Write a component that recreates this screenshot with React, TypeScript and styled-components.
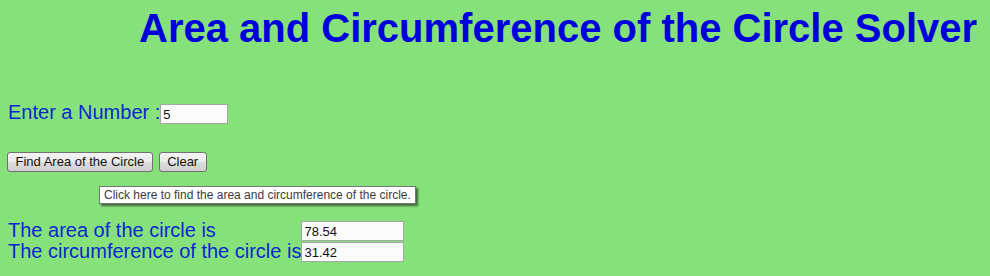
import React from "react";
import styled, { createGlobalStyle } from "styled-components";

const GlobalStyle = createGlobalStyle`
  html, body {
    margin: 0;
    padding: 0;
    background: #87e17b;
  }
  body {
    font-family: "Liberation Sans", Arial, sans-serif;
    min-height: 276px;
  }
`;

const Page = styled.main`
  display: flex;
  flex-direction: column;
  align-items: flex-start;
  padding: 5px 0 0 8px;
`;

const Title = styled.h1`
  margin: 0;
  padding-left: 131px;
  font-family: "Liberation Sans", Arial, sans-serif;
  font-size: 40px;
  font-weight: bold;
  line-height: 46px;
  color: #0000dc;
  white-space: nowrap;
`;

const NumberRow = styled.div`
  display: flex;
  align-items: flex-start;
  margin-top: 50px;
`;

const Label = styled.span`
  font-size: 20px;
  line-height: 23px;
  color: #0a28d0;
  white-space: pre;
`;

const TextBox = styled.input<{ $w: number; $top?: number }>`
  box-sizing: border-box;
  width: ${(p) => p.$w}px;
  height: 20px;
  margin: ${(p) => p.$top ?? 0}px 0 0 0;
  padding: 0 2px;
  border: 1px solid #a4a8a4;
  background: #fbfbfb;
  font-family: "Liberation Sans", Arial, sans-serif;
  font-size: 13px;
  color: #111;
  outline: none;
`;

const ButtonRow = styled.div`
  position: relative;
  display: flex;
  gap: 6px;
  margin: 28px 0 0 -1px;
`;

const Button = styled.button`
  box-sizing: border-box;
  height: 20px;
  padding: 0 7.5px;
  border: 1px solid #707070;
  border-radius: 3px;
  background: linear-gradient(#f3f3f3 0%, #ebebeb 50%, #dddddd 51%, #cfcfcf 100%);
  font-family: "Liberation Sans", Arial, sans-serif;
  font-size: 13px;
  line-height: 18px;
  color: #111;
  cursor: pointer;
`;

const Tooltip = styled.div`
  position: absolute;
  left: 92px;
  top: 34px;
  box-sizing: border-box;
  height: 18px;
  padding: 0 4px;
  border: 1px solid #767676;
  background: #ffffff;
  box-shadow: 2px 2px 2px rgba(0, 0, 0, 0.55);
  font-family: "Liberation Sans", Arial, sans-serif;
  font-size: 12px;
  line-height: 16px;
  color: #3c3c3c;
  white-space: nowrap;
`;

const Results = styled.div`
  display: grid;
  grid-template-columns: auto auto;
  grid-auto-rows: 21px;
  margin-top: 48px;
`;

const ResultLabel = styled.span`
  font-size: 20px;
  line-height: 20px;
  color: #0a28d0;
  white-space: pre;
`;

export default function App() {
  return (
    <>
      <GlobalStyle />
      <Page>
        <Title>Area and Circumference of the Circle Solver</Title>
        <NumberRow>
          <Label>Enter a Number :</Label>
          <TextBox $w={68} $top={3} defaultValue="5" />
        </NumberRow>
        <ButtonRow>
          <Button>Find Area of the Circle</Button>
          <Button>Clear</Button>
          <Tooltip>Click here to find the area and circumference of the circle.</Tooltip>
        </ButtonRow>
        <Results>
          <ResultLabel>The area of the circle is</ResultLabel>
          <TextBox $w={103} $top={1} defaultValue="78.54" readOnly />
          <ResultLabel>The circumference of the circle is</ResultLabel>
          <TextBox $w={103} $top={1} defaultValue="31.42" readOnly />
        </Results>
      </Page>
    </>
  );
}
